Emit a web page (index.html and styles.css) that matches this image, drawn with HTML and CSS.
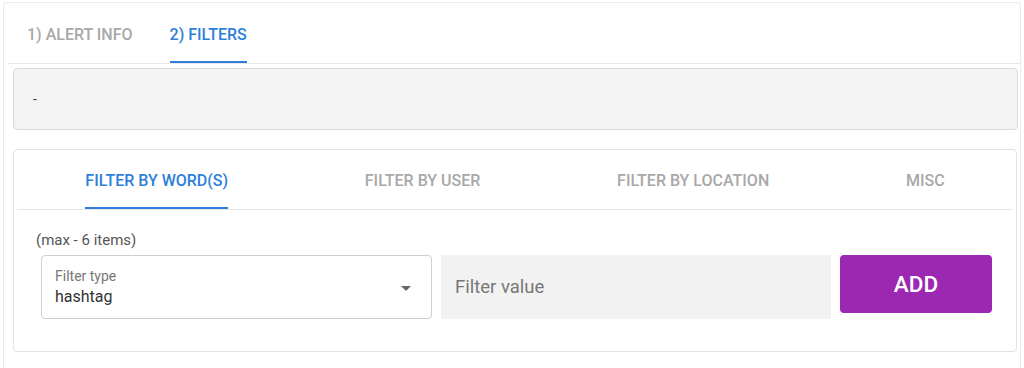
FILE: index.html
```html
<!DOCTYPE html>
<html>
<head>
<meta charset="utf-8">
<link rel="stylesheet" href="styles.css">
</head>
<body>
<div class="panel">
  <div class="steps">
    <div class="step">1) ALERT INFO</div>
    <div class="step active">2) FILTERS</div>
  </div>
  <div class="summary">-</div>
  <div class="card">
    <div class="tabs">
      <div class="tab active">FILTER BY WORD(S)</div>
      <div class="tab">FILTER BY USER</div>
      <div class="tab">FILTER BY LOCATION</div>
      <div class="tab">MISC</div>
    </div>
    <div class="body">
      <div class="hint">(max - 6 items)</div>
      <div class="form">
        <div class="select">
          <div class="select-text">
            <div class="select-label">Filter type</div>
            <div class="select-value">hashtag</div>
          </div>
          <svg class="caret" width="10" height="5" viewBox="0 0 10 5"><path d="M0 0L10 0L5 5Z" fill="#666"/></svg>
        </div>
        <div class="input">Filter value</div>
        <button class="add">ADD</button>
      </div>
    </div>
  </div>
</div>
</body>
</html>
```
FILE: styles.css
```css
html, body {
  margin: 0;
  padding: 0;
  background: #fff;
  font-family: Roboto, "Liberation Sans", sans-serif;
}
body {
  padding: 2px 0 0 3px;
}
.panel {
  width: 1018px;
  height: 366px;
  border: 1px solid #ececec;
  border-bottom: none;
  border-radius: 4px 4px 0 0;
  padding-left: 4px;
  box-sizing: border-box;
}
.steps {
  display: flex;
  height: 60px;
  border-bottom: 1px solid #e6e6e6;
  padding-left: 19px;
  gap: 37px;
}
.step {
  display: flex;
  align-items: center;
  font-size: 16px;
  font-weight: 500;
  color: #a8a8a8;
  border-bottom: 2px solid transparent;
  padding-top: 4px;
}
.step.active {
  color: #2d7fdb;
  border-bottom-color: #2d7fdb;
}
.summary {
  margin: 4px 2px 0 5px;
  height: 62px;
  box-sizing: border-box;
  background: #f3f3f3;
  border: 1px solid #dcdcdc;
  border-radius: 4px;
  padding-left: 19px;
  display: flex;
  align-items: center;
  font-size: 14px;
  color: #444;
}
.card {
  margin: 19px 3px 0 5px;
  height: 203px;
  box-sizing: border-box;
  border: 1px solid #e2e2e2;
  border-radius: 4px;
  padding: 0 3px;
}
.tabs {
  display: flex;
  justify-content: space-around;
  height: 59px;
  border-bottom: 1px solid #e6e6e6;
}
.tab {
  display: flex;
  align-items: center;
  font-size: 16px;
  font-weight: 500;
  color: #a8a8a8;
  border-bottom: 2px solid transparent;
  padding-top: 3px;
}
.tab.active {
  color: #2d7fdb;
  border-bottom-color: #2d7fdb;
}
.body {
  padding: 21px 0 0 19px;
}
.hint {
  font-size: 15px;
  color: #555;
  line-height: 18px;
}
.form {
  display: flex;
  gap: 9px;
  margin-top: 6px;
  margin-left: 5px;
  align-items: flex-start;
}
.select {
  width: 391px;
  height: 64px;
  box-sizing: border-box;
  border: 1px solid #cfcfcf;
  border-radius: 4px;
  display: flex;
  align-items: center;
  padding: 0 20px 0 13px;
}
.select-text {
  flex: 1;
}
.select-label {
  font-size: 14px;
  color: #777;
  line-height: 16px;
}
.select-value {
  font-size: 16px;
  color: #333;
  line-height: 20px;
  margin-top: 3px;
}
.caret {
  margin-top: 2px;
}
.input {
  width: 390px;
  height: 64px;
  box-sizing: border-box;
  background: #f2f2f2;
  display: flex;
  align-items: center;
  padding-left: 14px;
  font-size: 18.5px;
  color: #777;
}
.add {
  width: 152px;
  height: 58px;
  border: none;
  border-radius: 4px;
  background: #9c27b0;
  color: #fff;
  font-family: Roboto, "Liberation Sans", sans-serif;
  font-size: 22.5px;
  font-weight: 500;
}
```
